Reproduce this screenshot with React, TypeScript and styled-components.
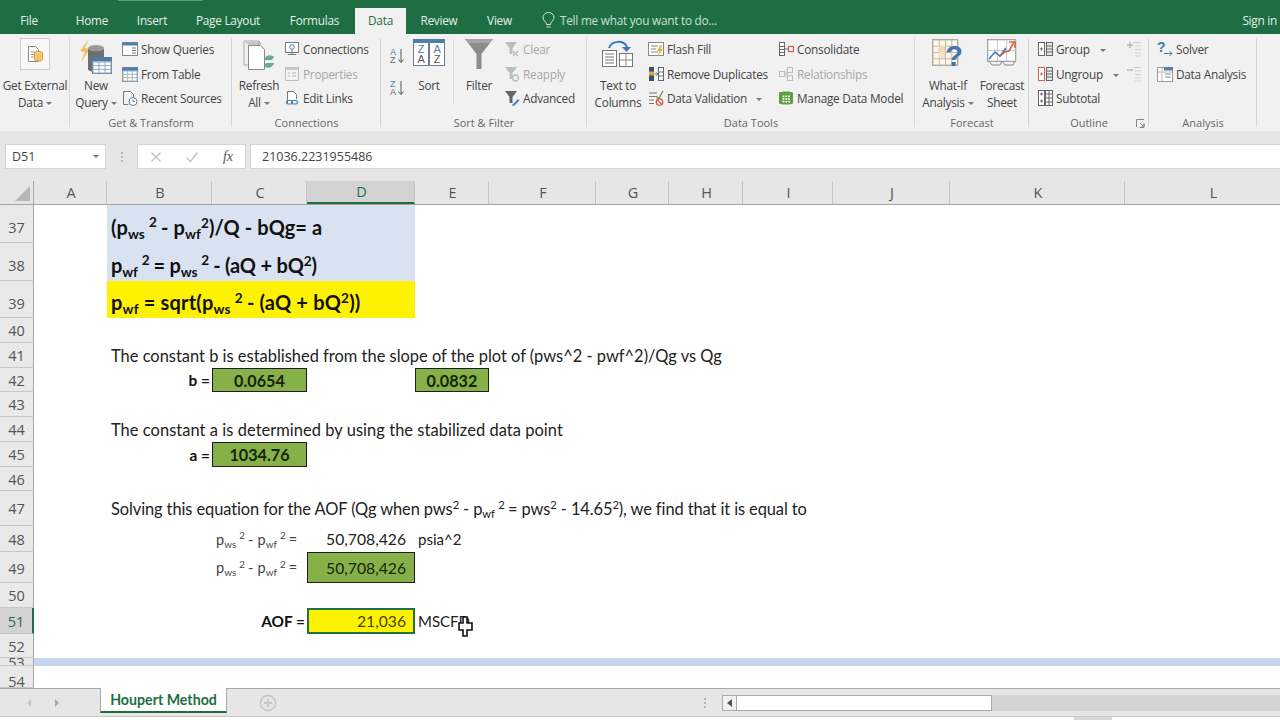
import styled, { createGlobalStyle } from "styled-components";
import type { ReactNode } from "react";

/* ================= STYLES ================= */

const UI_FONT = `"Open Sans", "Noto Sans", "Liberation Sans", sans-serif`;
const CELL_FONT = `Lato, "Open Sans", "Liberation Sans", sans-serif`;
const GREEN = "#1f6e43";
const COLS = "34px 73px 105px 95px 108px 74px 107px 73px 74px 90px 117px 175px 176px";

const Global = createGlobalStyle`
  html, body { margin: 0; padding: 0; background: #fff; }
  * { box-sizing: border-box; }
  body { font-family: ${UI_FONT}; }
`;

const Page = styled.div`
  width: 1280px;
  height: 720px;
  display: flex;
  flex-direction: column;
  overflow: hidden;
  background: #fff;
`;

/* ---- title tabs ---- */
const TabStrip = styled.div`
  height: 34px;
  flex: none;
  background: ${GREEN};
  display: flex;
  align-items: flex-end;
  position: relative;
  font-size: 11.8px;
  letter-spacing: -0.25px;
  color: #e4efe9;
  &::before {
    content: "";
    position: absolute;
    left: 118px;
    top: 0;
    width: 85px;
    height: 1px;
    background: #5f9c7c;
  }
`;

const MenuTab = styled.div<{ $w: number; $ml?: number; $active?: boolean }>`
  width: ${(p) => p.$w}px;
  margin-left: ${(p) => p.$ml ?? 0}px;
  height: 26px;
  display: flex;
  align-items: center;
  justify-content: center;
  padding-bottom: 2px;
  background: ${(p) => (p.$active ? "#f1f1f1" : "transparent")};
  color: ${(p) => (p.$active ? GREEN : "inherit")};
`;

const TellMe = styled.div`
  height: 26px;
  display: flex;
  align-items: center;
  gap: 5px;
  padding: 0 0 2px 15px;
  color: #c9e0d3;
`;

const SignIn = styled.div`
  height: 26px;
  margin-left: auto;
  padding: 0 3px 2px 0;
  display: flex;
  align-items: center;
`;

/* ---- ribbon ---- */
const Ribbon = styled.div`
  height: 97px;
  flex: none;
  display: flex;
  background: #f1f1f1;
  font-size: 11.8px;
  letter-spacing: -0.25px;
  color: #444;
`;

const Group = styled.div<{ $w: number }>`
  width: ${(p) => p.$w}px;
  flex: none;
  display: flex;
  flex-direction: column;
  position: relative;
  &::after {
    content: "";
    position: absolute;
    right: 0;
    top: 4px;
    bottom: 4px;
    width: 1px;
    background: #d6d6d6;
  }
`;

const GroupBody = styled.div`
  height: 80px;
  padding-top: 3px;
  display: flex;
  flex: none;
`;

const GroupLabel = styled.div`
  flex: 1;
  display: flex;
  align-items: center;
  justify-content: center;
  font-size: 11px;
  color: #666;
  letter-spacing: 0;
  padding-bottom: 1px;
  position: relative;
`;

const Launcher = styled.svg`
  position: absolute;
  right: 4px;
  top: 5px;
`;

const BigButton = styled.div<{ $w: number; $ml?: number }>`
  width: ${(p) => p.$w}px;
  margin-left: ${(p) => p.$ml ?? 0}px;
  flex: none;
  display: flex;
  flex-direction: column;
  align-items: center;
  line-height: 17px;
  text-align: center;
  white-space: nowrap;
`;

const BigIcon = styled.div<{ $h?: number }>`
  height: ${(p) => p.$h ?? 40}px;
  flex: none;
  display: flex;
  align-items: flex-start;
  justify-content: center;
  padding-top: 2px;
`;

const ExternalBox = styled.div`
  width: 30px;
  height: 32px;
  margin-top: -1px;
  background: #f8f8f8;
  border: 1px solid #cfcfcf;
  display: flex;
  align-items: center;
  justify-content: center;
`;

const Stack = styled.div<{ $ml: number; $w?: number }>`
  margin-left: ${(p) => p.$ml}px;
  ${(p) => (p.$w ? `width: ${p.$w}px;` : "")}
  flex: none;
  display: flex;
  flex-direction: column;
`;

const Item = styled.div<{ $off?: boolean }>`
  height: 24.5px;
  display: flex;
  align-items: center;
  gap: 3px;
  white-space: nowrap;
  color: ${(p) => (p.$off ? "#a8a8a8" : "#444")};
`;

const ItemIcon = styled.span`
  width: 17px;
  height: 17px;
  flex: none;
  display: flex;
  align-items: center;
  justify-content: center;
`;

const Caret = styled.span<{ $ml?: number }>`
  display: inline-block;
  margin-left: ${(p) => p.$ml ?? 3}px;
  vertical-align: 2px;
  width: 0;
  height: 0;
  border-left: 3px solid transparent;
  border-right: 3px solid transparent;
  border-top: 3px solid #777;
`;

const ThinRule = styled.div`
  width: 1px;
  height: 65px;
  margin: 2px 0 0 8px;
  background: #dcdcdc;
  flex: none;
`;

const SortStack = styled.div`
  width: 14px;
  margin-left: 9px;
  padding-top: 10px;
  display: flex;
  flex-direction: column;
  gap: 14px;
  flex: none;
`;

/* ---- formula bar ---- */
const FormulaArea = styled.div`
  height: 50px;
  flex: none;
  background: #e6e6e6;
  padding-top: 12px;
`;

const FormulaRow = styled.div`
  height: 27px;
  display: flex;
  align-items: stretch;
  padding: 1px 0;
  font-size: 12.5px;
  color: #444;
`;

const NameBox = styled.div`
  width: 101px;
  margin-left: 5px;
  background: #fff;
  border: 1px solid #d4d4d4;
  display: flex;
  align-items: center;
  justify-content: space-between;
  padding: 0 6px 0 6px;
`;

const Grip = styled.div`
  width: 31px;
  display: flex;
  flex-direction: column;
  align-items: center;
  justify-content: center;
  gap: 2px;
  i {
    width: 2px;
    height: 2px;
    background: #b4b4b4;
    display: block;
  }
`;

const FxBox = styled.div`
  width: 109px;
  background: #fff;
  border: 1px solid #d4d4d4;
  display: flex;
  align-items: center;
  justify-content: space-between;
  padding: 0 12px 0 12px;
`;

const FxMark = styled.span`
  font-family: "Liberation Serif", serif;
  font-style: italic;
  font-size: 14px;
  color: #555;
`;

const FormulaInput = styled.div`
  flex: 1;
  margin-left: 4px;
  background: #fff;
  border: 1px solid #d4d4d4;
  border-right: 0;
  display: flex;
  align-items: center;
  padding-left: 11px;
`;

/* ---- sheet ---- */
const ColumnBar = styled.div`
  height: 24px;
  flex: none;
  display: grid;
  grid-template-columns: ${COLS};
  background: #e6e6e6;
  border-bottom: 1px solid #a6a6a6;
  overflow: hidden;
`;

const Corner = styled.div`
  border-right: 1px solid #a6a6a6;
  display: flex;
  align-items: flex-end;
  justify-content: flex-end;
  padding: 0 3px 3px 0;
`;

const ColHead = styled.div<{ $active?: boolean }>`
  display: flex;
  align-items: center;
  justify-content: center;
  padding-left: 2px;
  font-size: 14.5px;
  color: ${(p) => (p.$active ? GREEN : "#555")};
  background: ${(p) => (p.$active ? "#d2d2d2" : "transparent")};
  border-right: 1px solid #c4c4c4;
  border-bottom: ${(p) => (p.$active ? `2px solid ${GREEN}` : "0")};
`;

const Sheet = styled.div`
  height: 483px;
  flex: none;
  overflow: hidden;
`;

const Row = styled.div<{ $h: number; $band?: boolean }>`
  height: ${(p) => p.$h}px;
  display: grid;
  grid-template-columns: ${COLS};
  grid-template-rows: ${(p) => p.$h}px;
  background: ${(p) => (p.$band ? "#c5d5ea" : "#fff")};
  overflow: ${(p) => (p.$band ? "hidden" : "visible")};
  font-family: ${CELL_FONT};
  color: #222;
`;

const RowHead = styled.div<{ $active?: boolean; $low?: number }>`
  grid-column: 1;
  grid-row: 1;
  display: flex;
  align-items: center;
  justify-content: center;
  padding-top: ${(p) => p.$low ?? 1}px;
  font-family: ${UI_FONT};
  font-size: 14.5px;
  color: ${(p) => (p.$active ? GREEN : "#555")};
  background: ${(p) => (p.$active ? "#d2d2d2" : "#e9e9e9")};
  border-right: ${(p) => (p.$active ? `2px solid ${GREEN}` : "1px solid #a6a6a6")};
  border-bottom: 1px solid #c8c8c8;
  overflow: hidden;
`;

const Cell = styled.div<{ $from: number; $span?: number; $track?: number }>`
  grid-column: ${(p) => p.$from} / span ${(p) => p.$span ?? 1};
  grid-row: 1;
  min-width: 0;
  display: flex;
  align-items: center;
  white-space: nowrap;
  padding-left: 4px;
  font-size: 16.45px;
  letter-spacing: ${(p) => p.$track ?? 0}px;
  position: relative;
`;

const RightCell = styled(Cell)`
  justify-content: flex-end;
  padding: 0 9px 0 0;
  font-size: 15.7px;
`;

const UnitCell = styled(Cell)`
  padding-left: 3px;
  font-size: 15px;
`;

const FormulaCell = styled(Cell)<{ $bg: string }>`
  background: ${(p) => p.$bg};
  font-size: 20px;
  font-weight: 700;
  color: #111;
  padding-top: 5px;
`;

const BoldRight = styled(Cell)`
  justify-content: flex-end;
  padding: 0 2px 0 0;
  font-size: 15.4px;
  font-weight: 700;
  color: #111;
`;

const GreenBox = styled(Cell)<{ $center?: boolean }>`
  background: #86b048;
  border: 1px solid #1c1c1c;
  justify-content: ${(p) => (p.$center ? "center" : "flex-end")};
  padding: 0 ${(p) => (p.$center ? 0 : 8)}px 0 0;
  font-size: ${(p) => (p.$center ? 16.2 : 15.7)}px;
  font-weight: ${(p) => (p.$center ? 700 : 400)};
  color: #16240a;
`;

const SelectedCell = styled(Cell)`
  background: #fff200;
  border: 2px solid #1f7246;
  justify-content: flex-end;
  padding: 0 7px 0 0;
  font-size: 15.7px;
  color: #4a4300;
`;

const FormulaSmall = styled(Cell)`
  font-size: 14.5px;
  color: #444;
  letter-spacing: 0.1px;
`;

const Sub = styled.span`
  font-size: 0.68em;
  vertical-align: -0.28em;
  line-height: 0;
`;

const Sup = styled.span<{ $gap?: boolean }>`
  font-size: 0.68em;
  vertical-align: 0.52em;
  line-height: 0;
  margin: ${(p) => (p.$gap ? "0 0.3em 0 0.3em" : "0")};
`;

const Pointer = styled.svg`
  position: absolute;
  left: 43px;
  top: 8px;
`;

/* ---- sheet tabs ---- */
const TabBar = styled.div`
  height: 29px;
  flex: none;
  display: flex;
  background: #e6e6e6;
  border-top: 1px solid #a9a9a9;
  border-bottom: 1px solid #c8c8c8;
`;

const NavArrows = styled.div`
  width: 100px;
  flex: none;
  display: flex;
  align-items: center;
  padding: 0 40px 0 26px;
  justify-content: space-between;
`;

const SheetTab = styled.div`
  width: 127px;
  height: 25px;
  margin-top: -1px;
  background: #fff;
  border-left: 1px solid #a9a9a9;
  border-right: 1px solid #a9a9a9;
  border-bottom: 2px solid ${GREEN};
  display: flex;
  align-items: center;
  justify-content: center;
  font-family: ${CELL_FONT};
  font-weight: 700;
  font-size: 14.2px;
  color: ${GREEN};
`;

const AddSheet = styled.div`
  width: 478px;
  flex: none;
  display: flex;
  align-items: center;
  padding-left: 32px;
`;

const ScrollGrip = styled(Grip)`
  width: 0;
`;

const ScrollTrack = styled.div`
  flex: 1;
  height: 16px;
  margin: 6px 0 0 17px;
  background: #d4d4d4;
  display: flex;
`;

const ScrollBtn = styled.div`
  width: 15px;
  background: #f2f2f2;
  border: 1px solid #ababab;
  display: flex;
  align-items: center;
  justify-content: center;
`;

const ScrollThumb = styled.div`
  width: 255px;
  background: #fff;
  border: 1px solid #ababab;
  border-left: 0;
`;

const Foot = styled.div`
  flex: 1;
  background: #fff;
  padding-left: 1074px;
`;

const FootMark = styled.div`
  width: 38px;
  height: 100%;
  background: #d8d8d8;
`;

/* ================= ICONS ================= */

type Box = { w?: number; h?: number; vb?: string; children: ReactNode };

const Svg = ({ w = 16, h = 16, vb, children }: Box) => (
  <svg width={w} height={h} viewBox={vb ?? `0 0 ${w} ${h}`} fill="none">
    {children}
  </svg>
);

const GridLines = ({ x, y, w, h, nx, ny, c }: { x: number; y: number; w: number; h: number; nx: number; ny: number; c: string }) => {
  const d: string[] = [];
  for (let i = 0; i <= nx; i++) d.push(`M${x + (w * i) / nx} ${y}v${h}`);
  for (let j = 0; j <= ny; j++) d.push(`M${x} ${y + (h * j) / ny}h${w}`);
  return <path d={d.join("")} stroke={c} strokeWidth="1" />;
};

const ExternalIcon = () => (
  <Svg w={18} h={20}>
    <path d="M2.5 2.5h7l3 3v12h-10z" fill="#fff" stroke="#888" />
    <path d="M5 8h4M5 10.5h4M5 13h4" stroke="#999" />
    <ellipse cx="12.5" cy="9" rx="4" ry="1.6" fill="#f6d38a" stroke="#d9a441" />
    <path d="M8.5 9v6.5c0 1 1.8 1.7 4 1.7s4-.7 4-1.7V9" fill="#f3c56b" stroke="#d9a441" />
  </Svg>
);

const NewQueryIcon = () => (
  <Svg w={34} h={40}>
    <path d="M10 0 1 12l5 1-4 10 9-13-5-1z" fill="#eec06a" />
    <ellipse cx="17" cy="9" rx="8" ry="3" fill="#9a9a9a" />
    <path d="M9 9v21c0 2 4 3 8 3s8-1 8-3V9c0 2-4 3-8 3s-8-1-8-3z" fill="#6f6f6f" />
    <rect x="13.5" y="18.5" width="19" height="16" fill="#fff" stroke="#5c7f9f" />
    <rect x="13.5" y="18.5" width="19" height="4" fill="#4d7aa6" />
    <GridLines x={14} y={23} w={18} h={11} nx={3} ny={3} c="#8fa9c2" />
  </Svg>
);

const ShowQueriesIcon = () => (
  <Svg>
    <rect x=".5" y="1.5" width="15" height="13" fill="#fff" stroke="#7a8a99" />
    <rect x=".5" y="1.5" width="15" height="3" fill="#4f7fae" />
    <path d="M10 7h4M10 9.5h4M10 12h4" stroke="#777" />
  </Svg>
);

const FromTableIcon = () => (
  <Svg>
    <rect x=".5" y="1.5" width="15" height="14" fill="#fff" stroke="#7a8a99" />
    <rect x=".5" y="1.5" width="15" height="3.5" fill="#4f7fae" />
    <GridLines x={1} y={5} w={14} h={10} nx={3} ny={3} c="#a7b6c4" />
  </Svg>
);

const RecentIcon = () => (
  <Svg>
    <path d="M1.5 14.5v-13h7l3 3v3" stroke="#777" />
    <path d="M1.5 14.5h5" stroke="#777" />
    <circle cx="11" cy="11.5" r="4" fill="#fff" stroke="#5e7f9c" />
    <path d="M11 9.5v2h2" stroke="#5e7f9c" />
  </Svg>
);

const RefreshIcon = () => (
  <Svg w={32} h={34}>
    <path d="M1 2h15v24H1zM3 4h15M5 5h13" stroke="#aaa" />
    <path d="M5.5 6.5h12l4 4v20h-16z" fill="#fff" stroke="#888" />
    <path d="M21 21a6 6 0 0 1 10-3l-2 3h-8zM31 24a6 6 0 0 1-10 3l2-3h8z" fill="#64ad8d" />
  </Svg>
);

const ConnectionsIcon = () => (
  <Svg>
    <rect x="1.5" y="1.5" width="13" height="10" fill="#fff" stroke="#777" />
    <circle cx="8" cy="6" r="2.3" stroke="#4f7fae" />
    <path d="M8 8.5v5M4 13.5h8" stroke="#777" />
  </Svg>
);

const PropertiesIcon = () => (
  <Svg>
    <rect x="1.5" y="1.5" width="13" height="13" fill="#f4f4f4" stroke="#bbb" />
    <rect x="1.5" y="1.5" width="13" height="2.5" fill="#c9c9c9" />
    <path d="M4 7h2M8 7h4M4 10h2M8 10h4" stroke="#b5b5b5" />
  </Svg>
);

const EditLinksIcon = () => (
  <Svg>
    <path d="M3.5 13V1.5h6l3 3V9" stroke="#777" fill="#fff" />
    <rect x="2.5" y="10.5" width="6" height="3.5" rx="1.7" stroke="#4f7fae" strokeWidth="1.2" />
    <rect x="7.5" y="10.5" width="6" height="3.5" rx="1.7" stroke="#4f7fae" strokeWidth="1.2" />
  </Svg>
);

const SortSmall = ({ top, bottom }: { top: string; bottom: string }) => (
  <Svg w={15} h={18}>
    <text x="0" y="8" fontSize="9" fontFamily="Liberation Sans" fill="#4f7fae">{top}</text>
    <text x="0" y="16" fontSize="9" fontFamily="Liberation Sans" fill="#666">{bottom}</text>
    <path d="M11 2v13M8.5 12.5 11 15.5l2.5-3" stroke="#555" />
  </Svg>
);

const SortBigIcon = () => (
  <Svg w={32} h={28}>
    <rect x=".5" y=".5" width="15" height="26" fill="#fff" stroke="#6d7f90" />
    <rect x="16.5" y=".5" width="15" height="26" fill="#fff" stroke="#6d7f90" />
    <rect x="0" y="0" width="32" height="4" fill="#4f7fae" />
    <text x="8" y="14" textAnchor="middle" fontSize="11" fontFamily="Liberation Sans" fill="#4f7fae">Z</text>
    <text x="8" y="24" textAnchor="middle" fontSize="11" fontFamily="Liberation Sans" fill="#555">A</text>
    <text x="24" y="14" textAnchor="middle" fontSize="11" fontFamily="Liberation Sans" fill="#4f7fae">A</text>
    <text x="24" y="24" textAnchor="middle" fontSize="11" fontFamily="Liberation Sans" fill="#555">Z</text>
  </Svg>
);

const FunnelIcon = () => (
  <Svg w={28} h={31}>
    <path d="M0 0h28L16.5 15v15h-5V15z" fill="#8c8c8c" />
    <path d="M0 0h28l-3 4H3z" fill="#a4a4a4" />
  </Svg>
);

const SmallFunnel = ({ c, mark }: { c: string; mark: "x" | "r" | "p" }) => (
  <Svg>
    <path d="M1 1h12L8.5 7v6h-3V7z" fill={c} />
    {mark === "x" && <path d="M9 10l5 5M14 10l-5 5" stroke="#b9b9b9" strokeWidth="1.3" />}
    {mark === "r" && <circle cx="11.5" cy="12" r="3" stroke="#b3c4b8" strokeWidth="1.3" />}
    {mark === "p" && <path d="M8 15l6-6 1.5 1.5-6 6z" fill="#3f87c4" />}
  </Svg>
);

const TextColumnsIcon = () => (
  <Svg w={32} h={30}>
    <rect x=".5" y="11.5" width="14" height="16" fill="#fff" stroke="#777" />
    <path d="M3 15h9M3 18h9M3 21h9M3 24h9" stroke="#777" />
    <rect x="17.5" y="14.5" width="13" height="13" fill="#fff" stroke="#777" />
    <path d="M18 21h12M24 15v12" stroke="#888" />
    <path d="M7 9C10 1 22 1 25 8" stroke="#3f78b0" strokeWidth="2" />
    <path d="M20 8h9l-4.500 5z" fill="#3f78b0" />
  </Svg>
);

const FlashFillIcon = () => (
  <Svg>
    <rect x=".5" y="1.5" width="15" height="13" fill="#fff" stroke="#888" />
    <path d="M3 5h7M3 8h5M3 11h7" stroke="#888" />
    <path d="M12 4 9 10h2.500L10 15l5-7h-2.500L14 4z" fill="#e7b63c" />
  </Svg>
);

const RemoveDupIcon = () => (
  <Svg>
    <rect x="1" y="1" width="5" height="14" fill="#3a4f68" />
    <rect x="1" y="5.500" width="5" height="4" fill="#d6a73a" />
    <rect x="10.500" y="1.500" width="5" height="13" fill="#fff" stroke="#666" />
    <path d="M11 6h4M11 10h4" stroke="#666" />
    <path d="M6.500 8h3M8.500 6.500 10 8l-1.500 1.500" stroke="#3f78b0" />
  </Svg>
);

const ValidationIcon = () => (
  <Svg>
    <path d="M1 3h8M1 6.500h7M1 10h5M1 13.500h5" stroke="#777" />
    <path d="M8 6l2.500 3L15 1" stroke="#6a9a63" strokeWidth="1.400" />
    <circle cx="11.500" cy="12" r="3.200" fill="#fff" stroke="#d2543f" strokeWidth="1.300" />
    <path d="M9.500 10l4 4" stroke="#d2543f" strokeWidth="1.300" />
  </Svg>
);

const ConsolidateIcon = () => (
  <Svg>
    <rect x="1.500" y="1.500" width="5" height="13" fill="#fff" stroke="#666" />
    <path d="M2 5.500h4M2 8.500h4M2 11.500h4" stroke="#666" />
    <path d="M7 8h3" stroke="#3f78b0" />
    <rect x="10.500" y="5.500" width="5" height="5" fill="#fff" stroke="#d2634a" strokeWidth="1.300" />
  </Svg>
);

const RelationIcon = () => (
  <Svg>
    <rect x="1.500" y="5.500" width="5" height="5" stroke="#bdbdbd" />
    <rect x="9.500" y="1.500" width="5" height="5" stroke="#bdbdbd" />
    <rect x="9.500" y="9.500" width="5" height="5" stroke="#bdbdbd" />
    <path d="M6.500 8h3M9 4v8" stroke="#bdbdbd" />
  </Svg>
);

const DataModelIcon = () => (
  <Svg>
    <path d="M1 3c0-2 14-2 14 0v10c0 2-14 2-14 0z" fill="#5ea03f" />
    <rect x="4" y="5" width="8.500" height="8" fill="#fff" />
    <GridLines x={4} y={5} w={8.5} h={8} nx={3} ny={3} c="#5ea03f" />
  </Svg>
);

const WhatIfIcon = () => (
  <Svg w={32} h={33}>
    <rect x=".5" y=".5" width="25" height="26" fill="#fbf6ee" stroke="#999" />
    <GridLines x={1} y={1} w={25} h={25} nx={4} ny={4} c="#c9b9a5" />
    <rect x="7" y="7" width="6" height="6" fill="#f4d7b5" />
    <rect x="7" y="13" width="6" height="6" fill="#f7e3c0" />
    <text x="22" y="27" textAnchor="middle" fontSize="29" fontWeight="700" fontFamily="Liberation Sans" fill="#3f78b0">?</text>
  </Svg>
);

const ForecastIcon = () => (
  <Svg w={30} h={30}>
    <rect x=".5" y=".5" width="28" height="22" fill="#fff" stroke="#888" />
    <GridLines x={1} y={1} w={28} h={21} nx={3} ny={2} c="#c6c6c6" />
    <path d="M2 20l6-7 5 4 6-8" stroke="#3f78b0" strokeWidth="1.600" />
    <path d="M13 17l5-4 4-1 5-9" stroke="#d2634a" strokeWidth="1.600" />
    <path d="M22 3h6v6" stroke="#d2634a" strokeWidth="1.600" />
    <path d="M2 22l3 4h8l2-4 3 4h8l2-4" stroke="#888" />
  </Svg>
);

const GroupIcon = ({ c = "#666" }: { c?: string }) => (
  <Svg>
    <rect x="1.500" y="1.500" width="6" height="13" fill="#fff" stroke={c} />
    <path d="M3 8h3M4.500 6.500v3" stroke={c} />
    <rect x="9.500" y="1.500" width="6" height="13" fill="#e8e8e8" stroke="#666" />
    <path d="M10 5h5M10 8h5M10 11h5" stroke="#666" />
  </Svg>
);

const SubtotalIcon = () => (
  <Svg>
    <rect x="1.500" y=".5" width="6" height="15" fill="#fff" stroke="#666" />
    <path d="M3 4h3M4.500 2.500v3M3 11h3M4.500 9.500v3" stroke="#666" />
    <rect x="8.500" y=".5" width="7" height="15" fill="#fff" stroke="#666" />
    <path d="M9 4h6M9 8h6M9 12h6M12 1v14" stroke="#666" />
  </Svg>
);

const DetailIcon = ({ plus }: { plus?: boolean }) => (
  <Svg>
    <path d={plus ? "M0 4h6M3 1v6" : "M0 4h6"} stroke="#b5b5b5" strokeWidth="1.400" />
    <path d="M6 1.500h8M8 5h6M8 8.500h6M8 12h6M8 15h6" stroke="#cfcfcf" />
  </Svg>
);

const SolverIcon = () => (
  <Svg>
    <text x="0" y="11" fontSize="14" fontWeight="700" fontFamily="Liberation Sans" fill="#3f78b0">?</text>
    <path d="M7 12.500h8M12.500 10l2.500 2.500-2.500 2.500" stroke="#3f78b0" />
  </Svg>
);

const AnalysisIcon = () => (
  <Svg>
    <rect x=".5" y="1.500" width="15" height="14" fill="#fff" stroke="#999" />
    <path d="M5 2v13M1 6h14" stroke="#bbb" />
    <rect x="7" y="1" width="9" height="3.500" fill="#4f7fae" />
    <path d="M8 8h6M8 11h6" stroke="#888" />
  </Svg>
);

const Bulb = () => (
  <Svg w={13} h={17}>
    <path d="M4.500 12.500C4.500 9.500 1 9 1 5.500a5.500 5 0 0 1 11 0c0 3.500-3.500 4-3.500 7z" stroke="#d6e6dc" />
    <path d="M4.500 15h4" stroke="#d6e6dc" />
  </Svg>
);

/* ================= HELPERS ================= */

const LineItem = ({ icon, off, children }: { icon: ReactNode; off?: boolean; children: ReactNode }) => (
  <Item $off={off}>
    <ItemIcon>{icon}</ItemIcon>
    <span>{children}</span>
  </Item>
);

const Ws = () => (
  <>
    p<Sub>ws</Sub>
  </>
);
const Wf = () => (
  <>
    p<Sub>wf</Sub>
  </>
);

const HEADERS: [string, boolean?][] = [
  ["A"], ["B"], ["C"], ["D", true], ["E"], ["F"], ["G"], ["H"], ["I"], ["J"], ["K"], ["L"],
];

/* ================= COMPONENT ================= */

export default function App() {
  return (
    <Page>
      <Global />

      <TabStrip>
        <MenuTab $w={58}>File</MenuTab>
        <MenuTab $w={68}>Home</MenuTab>
        <MenuTab $w={52}>Insert</MenuTab>
        <MenuTab $w={100}>Page Layout</MenuTab>
        <MenuTab $w={73}>Formulas</MenuTab>
        <MenuTab $w={51} $ml={4} $active>Data</MenuTab>
        <MenuTab $w={66}>Review</MenuTab>
        <MenuTab $w={55}>View</MenuTab>
        <TellMe>
          <Bulb />
          Tell me what you want to do...
        </TellMe>
        <SignIn>Sign in</SignIn>
      </TabStrip>

      <Ribbon>
        <Group $w={70}>
          <GroupBody>
            <BigButton $w={70}>
              <BigIcon>
                <ExternalBox>
                  <ExternalIcon />
                </ExternalBox>
              </BigIcon>
              Get External
              <span>Data<Caret /></span>
            </BigButton>
          </GroupBody>
          <GroupLabel />
        </Group>

        <Group $w={162}>
          <GroupBody>
            <BigButton $w={46} $ml={3}>
              <BigIcon>
                <NewQueryIcon />
              </BigIcon>
              New
              <span>Query<Caret /></span>
            </BigButton>
            <Stack $ml={2}>
              <LineItem icon={<ShowQueriesIcon />}>Show Queries</LineItem>
              <LineItem icon={<FromTableIcon />}>From Table</LineItem>
              <LineItem icon={<RecentIcon />}>Recent Sources</LineItem>
            </Stack>
          </GroupBody>
          <GroupLabel>Get &amp; Transform</GroupLabel>
        </Group>

        <Group $w={149}>
          <GroupBody>
            <BigButton $w={46} $ml={4}>
              <BigIcon>
                <RefreshIcon />
              </BigIcon>
              Refresh
              <span>All<Caret /></span>
            </BigButton>
            <Stack $ml={1}>
              <LineItem icon={<ConnectionsIcon />}>Connections</LineItem>
              <LineItem icon={<PropertiesIcon />} off>Properties</LineItem>
              <LineItem icon={<EditLinksIcon />}>Edit Links</LineItem>
            </Stack>
          </GroupBody>
          <GroupLabel>Connections</GroupLabel>
        </Group>

        <Group $w={206}>
          <GroupBody>
            <SortStack>
              <SortSmall top="A" bottom="Z" />
              <SortSmall top="Z" bottom="A" />
            </SortStack>
            <BigButton $w={32} $ml={9}>
              <BigIcon>
                <SortBigIcon />
              </BigIcon>
              Sort
            </BigButton>
            <ThinRule />
            <BigButton $w={40} $ml={5}>
              <BigIcon>
                <FunnelIcon />
              </BigIcon>
              Filter
            </BigButton>
            <Stack $ml={4}>
              <LineItem icon={<SmallFunnel c="#bdbdbd" mark="x" />} off>Clear</LineItem>
              <LineItem icon={<SmallFunnel c="#bdbdbd" mark="r" />} off>Reapply</LineItem>
              <LineItem icon={<SmallFunnel c="#666" mark="p" />}>Advanced</LineItem>
            </Stack>
          </GroupBody>
          <GroupLabel>Sort &amp; Filter</GroupLabel>
        </Group>

        <Group $w={328}>
          <GroupBody>
            <BigButton $w={50} $ml={6}>
              <BigIcon>
                <TextColumnsIcon />
              </BigIcon>
              Text to
              <span>Columns</span>
            </BigButton>
            <Stack $ml={4} $w={130}>
              <LineItem icon={<FlashFillIcon />}>Flash Fill</LineItem>
              <LineItem icon={<RemoveDupIcon />}>Remove Duplicates</LineItem>
              <LineItem icon={<ValidationIcon />}>
                Data Validation<Caret $ml={9} />
              </LineItem>
            </Stack>
            <Stack $ml={0}>
              <LineItem icon={<ConsolidateIcon />}>Consolidate</LineItem>
              <LineItem icon={<RelationIcon />} off>Relationships</LineItem>
              <LineItem icon={<DataModelIcon />}>Manage Data Model</LineItem>
            </Stack>
          </GroupBody>
          <GroupLabel>Data Tools</GroupLabel>
        </Group>

        <Group $w={114}>
          <GroupBody>
            <BigButton $w={56} $ml={5}>
              <BigIcon>
                <WhatIfIcon />
              </BigIcon>
              What-If
              <span>Analysis<Caret /></span>
            </BigButton>
            <BigButton $w={52} $ml={0}>
              <BigIcon>
                <ForecastIcon />
              </BigIcon>
              Forecast
              <span>Sheet</span>
            </BigButton>
          </GroupBody>
          <GroupLabel>Forecast</GroupLabel>
        </Group>

        <Group $w={120}>
          <GroupBody>
            <Stack $ml={7} $w={90}>
              <LineItem icon={<GroupIcon />}>Group<Caret $ml={10} /></LineItem>
              <LineItem icon={<GroupIcon c="#d2634a" />}>Ungroup<Caret $ml={10} /></LineItem>
              <LineItem icon={<SubtotalIcon />}>Subtotal</LineItem>
            </Stack>
            <Stack $ml={0}>
              <LineItem icon={<DetailIcon plus />}>{""}</LineItem>
              <LineItem icon={<DetailIcon />}>{""}</LineItem>
            </Stack>
          </GroupBody>
          <GroupLabel>
            Outline
            <Launcher width="9" height="9" viewBox="0 0 9 9" fill="none">
              <path d="M.5 8V.5H8M8 4v4.500H3.500M4 4l3.500 3.500M5 8h3V5" stroke="#888" />
            </Launcher>
          </GroupLabel>
        </Group>

        <Group $w={108}>
          <GroupBody>
            <Stack $ml={7}>
              <LineItem icon={<SolverIcon />}>Solver</LineItem>
              <LineItem icon={<AnalysisIcon />}>Data Analysis</LineItem>
            </Stack>
          </GroupBody>
          <GroupLabel>Analysis</GroupLabel>
        </Group>
      </Ribbon>

      <FormulaArea>
        <FormulaRow>
          <NameBox>
            D51
            <Caret />
          </NameBox>
          <Grip>
            <i />
            <i />
            <i />
          </Grip>
          <FxBox>
            <Svg w={12} h={12}>
              <path d="M1.500 1.500l9 9M10.500 1.500l-9 9" stroke="#c0c0c0" strokeWidth="1.300" />
            </Svg>
            <Svg w={14} h={12}>
              <path d="M1.500 6.500l4 4L12.500 1.500" stroke="#c0c0c0" strokeWidth="1.300" />
            </Svg>
            <FxMark>fx</FxMark>
          </FxBox>
          <FormulaInput>21036.2231955486</FormulaInput>
        </FormulaRow>
      </FormulaArea>

      <ColumnBar>
        <Corner>
          <svg width="15" height="15" viewBox="0 0 15 15">
            <path d="M15 0v15H0z" fill="#b7b7b7" />
          </svg>
        </Corner>
        {HEADERS.map(([name, active]) => (
          <ColHead key={name} $active={active}>{name}</ColHead>
        ))}
      </ColumnBar>

      <Sheet>
        <Row $h={38}>
          <RowHead $low={8}>37</RowHead>
          <FormulaCell $from={3} $span={3} $bg="#d9e2f0" $track={0.08}>
            <span>(<Ws /><Sup $gap>2</Sup>- <Wf /><Sup>2</Sup>)/Q - bQg= a</span>
          </FormulaCell>
        </Row>
        <Row $h={38}>
          <RowHead $low={8}>38</RowHead>
          <FormulaCell $from={3} $span={3} $bg="#d9e2f0" $track={-0.18}>
            <span><Wf /><Sup $gap>2</Sup>= <Ws /><Sup $gap>2</Sup>- (aQ + bQ<Sup>2</Sup>)</span>
          </FormulaCell>
        </Row>
        <Row $h={37}>
          <RowHead $low={8}>39</RowHead>
          <FormulaCell $from={3} $span={3} $bg="#fff200" $track={0.18}>
            <span><Wf /> = sqrt(<Ws /><Sup $gap>2</Sup>- (aQ + bQ<Sup>2</Sup>))</span>
          </FormulaCell>
        </Row>
        <Row $h={25}><RowHead>40</RowHead></Row>
        <Row $h={25}>
          <RowHead>41</RowHead>
          <Cell $from={3}>The constant b is established from the slope of the plot of (pws^2 - pwf^2)/Qg vs Qg</Cell>
        </Row>
        <Row $h={24}>
          <RowHead>42</RowHead>
          <BoldRight $from={3}>b =</BoldRight>
          <GreenBox $from={4} $center>0.0654</GreenBox>
          <GreenBox $from={6} $center>0.0832</GreenBox>
        </Row>
        <Row $h={25}><RowHead>43</RowHead></Row>
        <Row $h={25}>
          <RowHead>44</RowHead>
          <Cell $from={3} $track={0.05}>The constant a is determined by using the stabilized data point</Cell>
        </Row>
        <Row $h={25}>
          <RowHead>45</RowHead>
          <BoldRight $from={3}>a =</BoldRight>
          <GreenBox $from={4} $center>1034.76</GreenBox>
        </Row>
        <Row $h={24}><RowHead>46</RowHead></Row>
        <Row $h={35}>
          <RowHead>47</RowHead>
          <Cell $from={3} $track={-0.1}>
            <span>Solving this equation for the AOF (Qg when pws<Sup>2</Sup> - p<Sub>wf</Sub><Sup $gap>2</Sup>= pws<Sup>2</Sup> - 14.65<Sup>2</Sup>), we find that it is equal to</span>
          </Cell>
        </Row>
        <Row $h={26}>
          <RowHead>48</RowHead>
          <FormulaSmall $from={4}>
            <span><Ws /><Sup $gap>2</Sup>- <Wf /><Sup $gap>2</Sup>=</span>
          </FormulaSmall>
          <RightCell $from={5}>50,708,426</RightCell>
          <UnitCell $from={6}>psia^2</UnitCell>
        </Row>
        <Row $h={31}>
          <RowHead $low={2}>49</RowHead>
          <FormulaSmall $from={4}>
            <span><Ws /><Sup $gap>2</Sup>- <Wf /><Sup $gap>2</Sup>=</span>
          </FormulaSmall>
          <GreenBox $from={5}>50,708,426</GreenBox>
        </Row>
        <Row $h={25}><RowHead>50</RowHead></Row>
        <Row $h={26}>
          <RowHead $active>51</RowHead>
          <BoldRight $from={4}>AOF =</BoldRight>
          <SelectedCell $from={5}>21,036</SelectedCell>
          <UnitCell $from={6}>
            MSCFD
            <Pointer width="15" height="22" viewBox="0 0 15 22">
              <path d="M5 1h4v6h5v7H9v6H5v-6H1V7h4z" fill="#fff" stroke="#111" strokeWidth="1.600" />
            </Pointer>
          </UnitCell>
        </Row>
        <Row $h={24}><RowHead>52</RowHead></Row>
        <Row $h={8} $band><RowHead>53</RowHead></Row>
        <Row $h={22}><RowHead $low={9}>54</RowHead></Row>
      </Sheet>

      <TabBar>
        <NavArrows>
          <svg width="6" height="10" viewBox="0 0 6 10"><path d="M5 1 1 5l4 4" fill="#c4c4c4" /></svg>
          <svg width="6" height="10" viewBox="0 0 6 10"><path d="M1 1l4 4-4 4" fill="#a8a8a8" /></svg>
        </NavArrows>
        <SheetTab>Houpert Method</SheetTab>
        <AddSheet>
          <svg width="18" height="18" viewBox="0 0 18 18" fill="none">
            <circle cx="9" cy="9" r="7.500" stroke="#c6c6c6" strokeWidth="1.500" />
            <path d="M9 5v8M5 9h8" stroke="#c6c6c6" strokeWidth="1.800" />
          </svg>
        </AddSheet>
        <ScrollGrip>
          <i />
          <i />
          <i />
        </ScrollGrip>
        <ScrollTrack>
          <ScrollBtn>
            <svg width="5" height="8" viewBox="0 0 5 8"><path d="M5 0v8L0 4z" fill="#555" /></svg>
          </ScrollBtn>
          <ScrollThumb />
        </ScrollTrack>
      </TabBar>
      <Foot>
        <FootMark />
      </Foot>
    </Page>
  );
}
